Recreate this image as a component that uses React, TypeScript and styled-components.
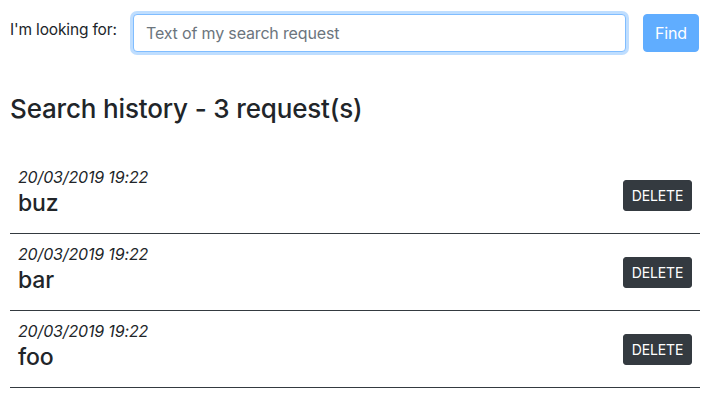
import styled, { createGlobalStyle } from "styled-components";

const GlobalStyle = createGlobalStyle`
  html, body {
    margin: 0;
    padding: 0;
    background: #fff;
  }
  body {
    font-family: Inter, "Liberation Sans", Arial, sans-serif;
    font-size: 16px;
    line-height: 1.5;
    color: #212529;
    letter-spacing: -0.01em;
  }
  * {
    box-sizing: border-box;
  }
`;

type Request = { date: string; text: string };

const history: Request[] = [
  { date: "20/03/2019 19:22", text: "buz" },
  { date: "20/03/2019 19:22", text: "bar" },
  { date: "20/03/2019 19:22", text: "foo" },
];

export default function App() {
  return (
    <>
      <GlobalStyle />
      <Page>
        <SearchForm onSubmit={(e) => e.preventDefault()}>
          <SearchLabel htmlFor="search">I'm looking for:</SearchLabel>
          <SearchInput
            id="search"
            type="text"
            placeholder="Text of my search request"
          />
          <FindButton type="submit" disabled>
            Find
          </FindButton>
        </SearchForm>

        <HistoryTitle>Search history - {history.length} request(s)</HistoryTitle>

        <HistoryList>
          {history.map((item, i) => (
            <HistoryItem key={i}>
              <ItemBody>
                <ItemDate>{item.date}</ItemDate>
                <ItemText>{item.text}</ItemText>
              </ItemBody>
              <DeleteButton type="button">Delete</DeleteButton>
            </HistoryItem>
          ))}
        </HistoryList>
      </Page>
    </>
  );
}

const Page = styled.div`
  padding: 14px 11px 0 10px;
`;

const SearchForm = styled.form`
  display: flex;
  align-items: flex-start;
  margin: 0;
`;

const SearchLabel = styled.label`
  width: 123px;
  flex-shrink: 0;
  margin-top: 4px;
  font-size: 15.5px;
  line-height: 24px;
  white-space: nowrap;
`;

const SearchInput = styled.input`
  flex: 1;
  min-width: 0;
  height: 38px;
  padding: 6px 12px;
  font-family: inherit;
  font-size: 16px;
  letter-spacing: inherit;
  line-height: 1.5;
  color: #495057;
  background: #fff;
  border: 1px solid #80bdff;
  border-radius: 4px;
  outline: 0;
  box-shadow: 0 0 0 3px rgba(0, 123, 255, 0.25);

  &::placeholder {
    color: #6c757d;
    opacity: 1;
  }
`;

const FindButton = styled.button`
  margin: 0 1px 0 17px;
  width: 56px;
  height: 38px;
  padding: 6px 0;
  font-family: inherit;
  font-size: 16px;
  letter-spacing: inherit;
  line-height: 1.5;
  color: #fff;
  background: #007bff;
  border: 1px solid #007bff;
  border-radius: 4px;
  opacity: 0.62;
`;

const HistoryTitle = styled.h3`
  margin: 41px 0 33px 0;
  font-size: 26px;
  font-weight: 500;
  line-height: 31px;
`;

const HistoryList = styled.ul`
  list-style: none;
  margin: 0;
  padding: 0;
`;

const HistoryItem = styled.li`
  display: flex;
  align-items: center;
  justify-content: space-between;
  padding: 8px 8px 7px 8px;
  border-bottom: 1px solid #343a40;
`;

const ItemBody = styled.div`
  display: flex;
  flex-direction: column;
`;

const ItemDate = styled.span`
  font-size: 16px;
  font-style: italic;
  line-height: 24px;
`;

const ItemText = styled.h4`
  margin: 0 0 8px 0;
  font-size: 23px;
  font-weight: 500;
  line-height: 29px;
`;

const DeleteButton = styled.button`
  width: 69px;
  height: 31px;
  padding: 4px 0;
  font-family: inherit;
  font-size: 14px;
  letter-spacing: inherit;
  line-height: 1.5;
  text-transform: uppercase;
  color: #fff;
  background: #343a40;
  border: 1px solid #343a40;
  border-radius: 3px;
  cursor: pointer;
`;
